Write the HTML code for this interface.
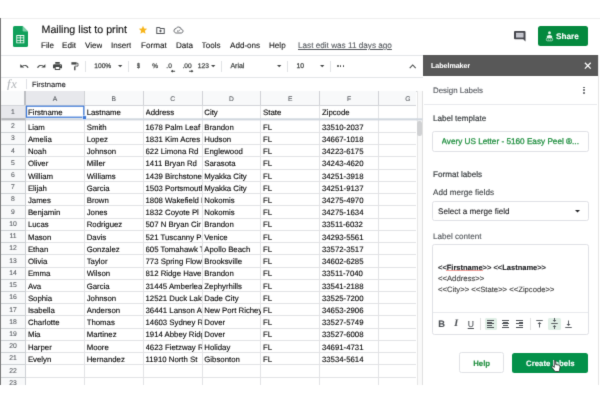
<!DOCTYPE html>
<html><head><meta charset="utf-8"><title>Mailing list to print</title>
<style>
html,body{margin:0;padding:0;background:#fff;}
body{width:600px;height:400px;overflow:hidden;position:relative;font-family:"Liberation Sans",Arial,sans-serif;text-rendering:geometricPrecision;}
#app{position:absolute;left:0;top:0;width:600px;height:400px;overflow:hidden;background:#fff;filter:url(#soft);}
.t{position:absolute;white-space:nowrap;overflow:hidden;}
.b{position:absolute;}
svg{position:absolute;overflow:visible;}
</style></head><body><svg width="0" height="0" style="position:absolute"><defs><filter id="soft" x="0" y="0" width="100%" height="100%" color-interpolation-filters="sRGB"><feConvolveMatrix order="3" kernelMatrix="0.0114 0.084 0.0114 0.084 0.6184 0.084 0.0114 0.084 0.0114" divisor="1" edgeMode="duplicate" preserveAlpha="true"/></filter></defs></svg><div id="app">

<div class="b" style="left:0;top:17.5px;width:1.3px;height:367.5px;background:#7a7a7a;"></div>
<div class="b" style="left:1px;top:18px;width:599px;height:1px;background:#efefef;"></div>
<svg style="left:13px;top:26px" width="15" height="21" viewBox="0 0 15 21">
<path d="M1.6 0 H9.6 L15 5.4 V19.4 Q15 21 13.4 21 H1.6 Q0 21 0 19.4 V1.6 Q0 0 1.6 0 Z" fill="#10a05b"/>
<path d="M9.6 0 L15 5.4 H10.8 Q9.6 5.4 9.6 4.2 Z" fill="#7fd0aa"/>
<path d="M3.3 9.0 H11.3 V17.3 H3.3 Z M4.20 9.90 V11.53 H6.90 V9.90 Z M4.20 12.33 V13.97 H6.90 V12.33 Z M4.20 14.77 V16.40 H6.90 V14.77 Z M7.70 9.90 V11.53 H10.40 V9.90 Z M7.70 12.33 V13.97 H10.40 V12.33 Z M7.70 14.77 V16.40 H10.40 V14.77 Z" fill="#f4faf6" fill-rule="evenodd"/>
</svg>
<div class="t " style="left:41.5px;top:23.30px;height:14px;line-height:14px;font-size:10.68px;color:#141414;font-weight:400;-webkit-text-stroke:0.15px currentColor;">Mailing list to print</div>
<svg style="left:138.2px;top:25px" width="10" height="10" viewBox="0 0 24 24"><path d="M12 17.27 18.18 21l-1.64-7.03L22 9.24l-7.19-.61L12 2 9.19 8.63 2 9.24l5.46 4.73L5.82 21z" fill="#f7b51c"/></svg>
<svg style="left:156.2px;top:26.5px" width="9" height="7" viewBox="0 0 19 15"><path d="M1.5 1 H7 L9 3 H17.5 V14 H1.5 Z" fill="none" stroke="#55585c" stroke-width="2.2" stroke-linejoin="round"/><path d="M9.5 5.5 V11.5 M6.5 8.5 H12.5" stroke="#55585c" stroke-width="2" fill="none"/></svg>
<svg style="left:174px;top:27px" width="9" height="6.4" viewBox="0 0 24 17"><path d="M19.35 6.04 A7.49 7.49 0 0 0 12 0 C9.11 0 6.6 1.64 5.35 4.04 A5.994 5.994 0 0 0 0 10 c0 3.31 2.69 6 6 6 h13 c2.76 0 5-2.24 5-5 0-2.64-2.05-4.78-4.65-4.96z" fill="none" stroke="#55585c" stroke-width="2.4"/><path d="M8 9.5 L11 12.2 L16 7" fill="none" stroke="#55585c" stroke-width="2.2"/></svg>
<div class="t " style="left:41px;top:40.20px;height:12px;line-height:12px;font-size:8.1px;color:#141414;font-weight:400;-webkit-text-stroke:0.1px currentColor;">File</div>
<div class="t " style="left:62px;top:40.20px;height:12px;line-height:12px;font-size:8.1px;color:#141414;font-weight:400;-webkit-text-stroke:0.1px currentColor;">Edit</div>
<div class="t " style="left:85px;top:40.20px;height:12px;line-height:12px;font-size:8.1px;color:#141414;font-weight:400;-webkit-text-stroke:0.1px currentColor;">View</div>
<div class="t " style="left:111px;top:40.20px;height:12px;line-height:12px;font-size:8.1px;color:#141414;font-weight:400;-webkit-text-stroke:0.1px currentColor;">Insert</div>
<div class="t " style="left:141px;top:40.20px;height:12px;line-height:12px;font-size:8.1px;color:#141414;font-weight:400;-webkit-text-stroke:0.1px currentColor;">Format</div>
<div class="t " style="left:176px;top:40.20px;height:12px;line-height:12px;font-size:8.1px;color:#141414;font-weight:400;-webkit-text-stroke:0.1px currentColor;">Data</div>
<div class="t " style="left:201.6px;top:40.20px;height:12px;line-height:12px;font-size:8.1px;color:#141414;font-weight:400;-webkit-text-stroke:0.1px currentColor;">Tools</div>
<div class="t " style="left:230px;top:40.20px;height:12px;line-height:12px;font-size:8.1px;color:#141414;font-weight:400;-webkit-text-stroke:0.1px currentColor;">Add-ons</div>
<div class="t " style="left:269px;top:40.20px;height:12px;line-height:12px;font-size:8.1px;color:#141414;font-weight:400;-webkit-text-stroke:0.1px currentColor;">Help</div>
<div class="t " style="left:298px;top:39.90px;height:12px;line-height:12px;font-size:8.18px;color:#55595e;font-weight:400;text-decoration:underline;text-underline-offset:1px;text-decoration-thickness:0.7px;-webkit-text-stroke:0.1px currentColor;">Last edit was 11 days ago</div>
<svg style="left:513.5px;top:30.5px" width="11.5" height="10.5" viewBox="0 0 23 21"><path d="M2 0 H21 Q23 0 23 2 V21 L18.5 16.5 H2 Q0 16.5 0 14.5 V2 Q0 0 2 0 Z" fill="#45464d"/><rect x="4" y="3.6" width="15" height="9.4" fill="#cfd0d7"/><path d="M4 6.9 H19 M4 9.9 H19" stroke="#a9aab2" stroke-width="0.9"/></svg>
<div class="b" style="left:537.6px;top:25.7px;width:50.4px;height:20.5px;background:#04893e;border-radius:2.5px;"></div>
<svg style="left:545.7px;top:30.8px" width="7" height="10.2" viewBox="0 0 16 21" preserveAspectRatio="none"><circle cx="8" cy="3.6" r="3.2" fill="#e6f4ea"/><path d="M2 10.5 Q8 6.5 14 10.5 V14.5 H2 Z" fill="#e6f4ea"/><rect x="0.8" y="14.6" width="14.4" height="5.6" rx="2.6" fill="none" stroke="#e6f4ea" stroke-width="1.5"/><circle cx="5" cy="17.4" r="1" fill="#e6f4ea"/><circle cx="11" cy="17.4" r="1" fill="#e6f4ea"/></svg>
<div class="t " style="left:556px;top:30.60px;height:12px;line-height:12px;font-size:8.2px;color:#ffffff;font-weight:700;-webkit-text-stroke:0.1px currentColor;">Share</div>
<div class="b" style="left:1px;top:54.5px;width:422px;height:1px;background:#e3e5e8;"></div>
<div class="b" style="left:1px;top:76.5px;width:422px;height:1px;background:#e3e5e8;"></div>
<svg style="left:20.2px;top:64.0px" width="8.6" height="5" viewBox="0 0 18 14" preserveAspectRatio="none"><path d="M5.5 5.5 C9.5 2.2 14.8 4 16.8 10.5" fill="none" stroke="#444746" stroke-width="2.6"/><path d="M0.5 1 V9.5 H9 Z" fill="#444746"/></svg>
<svg style="left:37px;top:64.0px" width="8.6" height="5" viewBox="0 0 18 14" preserveAspectRatio="none"><path d="M12.5 5.5 C8.5 2.2 3.2 4 1.2 10.5" fill="none" stroke="#444746" stroke-width="2.6"/><path d="M17.5 1 V9.5 H9 Z" fill="#444746"/></svg>
<svg style="left:53.2px;top:62.0px" width="9" height="8" viewBox="0 0 20 18" preserveAspectRatio="none"><path d="M5 0 H15 V4 H5 Z" fill="#444746"/><path d="M3 5 H17 Q20 5 20 8 V14 H16 V18 H4 V14 H0 V8 Q0 5 3 5 Z M6 11 V16 H14 V11 Z" fill="#444746" fill-rule="evenodd"/><circle cx="16.5" cy="8.3" r="1" fill="#fff"/></svg>
<svg style="left:70.6px;top:62.0px" width="7.6" height="8.2" viewBox="0 0 19 19" preserveAspectRatio="none"><path d="M1 0.5 H14 V6 H1 Z" fill="#444746"/><path d="M14 3 H17.5 V9.5 H9.5 V12" fill="none" stroke="#444746" stroke-width="2"/><path d="M7.8 11.5 H11.2 V19 H7.8 Z" fill="#444746"/></svg>
<div class="b" style="left:85px;top:61px;width:1px;height:10.5px;background:#e1e3e6;"></div>
<div class="t " style="left:94.2px;top:60.70px;height:12px;line-height:12px;font-size:6.7px;color:#444746;font-weight:400;-webkit-text-stroke:0.25px currentColor;">100%</div>
<svg style="left:118.2px;top:65.0px" width="4.4" height="2.2" viewBox="0 0 10 5"><path d="M0 0 H10 L5 5 Z" fill="#444746"/></svg>
<div class="b" style="left:128px;top:61px;width:1px;height:10.5px;background:#e1e3e6;"></div>
<div class="t " style="left:136.6px;top:60.70px;height:12px;line-height:12px;font-size:6.9px;color:#444746;font-weight:400;-webkit-text-stroke:0.25px currentColor;">$</div>
<div class="t " style="left:152.2px;top:60.70px;height:12px;line-height:12px;font-size:6.5px;color:#444746;font-weight:400;-webkit-text-stroke:0.25px currentColor;">%</div>
<div class="t " style="left:166.3px;top:60.70px;height:12px;line-height:12px;font-size:6.6px;color:#444746;font-weight:400;-webkit-text-stroke:0.25px currentColor;">.0</div>
<svg style="left:171px;top:69.6px" width="4.2" height="2.4" viewBox="0 0 10 6"><path d="M10 3 H2 M4 0.5 L1.2 3 L4 5.5" fill="none" stroke="#444746" stroke-width="2.6"/></svg>
<div class="t " style="left:182.4px;top:60.70px;height:12px;line-height:12px;font-size:6.6px;color:#444746;font-weight:400;-webkit-text-stroke:0.25px currentColor;">.00</div>
<svg style="left:188.5px;top:69.6px" width="4.2" height="2.4" viewBox="0 0 10 6"><path d="M0 3 H8 M6 0.5 L8.8 3 L6 5.5" fill="none" stroke="#444746" stroke-width="2.6"/></svg>
<div class="t " style="left:197.8px;top:60.70px;height:12px;line-height:12px;font-size:6.7px;color:#444746;font-weight:400;-webkit-text-stroke:0.25px currentColor;">123</div>
<svg style="left:210.60000000000002px;top:65.0px" width="4.4" height="2.2" viewBox="0 0 10 5"><path d="M0 0 H10 L5 5 Z" fill="#444746"/></svg>
<div class="b" style="left:220.5px;top:61px;width:1px;height:10.5px;background:#e1e3e6;"></div>
<div class="t " style="left:230.4px;top:60.70px;height:12px;line-height:12px;font-size:7px;color:#444746;font-weight:400;-webkit-text-stroke:0.25px currentColor;">Arial</div>
<svg style="left:276.8px;top:65.0px" width="4.4" height="2.2" viewBox="0 0 10 5"><path d="M0 0 H10 L5 5 Z" fill="#444746"/></svg>
<div class="b" style="left:287px;top:61px;width:1px;height:10.5px;background:#e1e3e6;"></div>
<div class="t " style="left:296.4px;top:60.70px;height:12px;line-height:12px;font-size:6.8px;color:#444746;font-weight:400;-webkit-text-stroke:0.25px currentColor;">10</div>
<svg style="left:320.3px;top:65.0px" width="4.4" height="2.2" viewBox="0 0 10 5"><path d="M0 0 H10 L5 5 Z" fill="#444746"/></svg>
<div class="b" style="left:330px;top:61px;width:1px;height:10.5px;background:#e1e3e6;"></div>
<div class="b" style="left:337.0px;top:65.1px;width:1.5px;height:1.5px;border-radius:1px;background:#444746;"></div>
<div class="b" style="left:339.9px;top:65.1px;width:1.5px;height:1.5px;border-radius:1px;background:#444746;"></div>
<div class="b" style="left:342.8px;top:65.1px;width:1.5px;height:1.5px;border-radius:1px;background:#444746;"></div>
<svg style="left:409px;top:63.599999999999994px" width="7.4" height="4.6" viewBox="0 0 16 10"><path d="M1.5 8.8 L8 2.2 L14.5 8.8" fill="none" stroke="#444746" stroke-width="2.2"/></svg>
<div class="b" style="left:1px;top:90.5px;width:422px;height:1px;background:#d5d7da;"></div>
<div class="t " style="left:7px;top:78.20px;height:12px;line-height:12px;font-size:12.5px;color:#b4b7bb;font-weight:400;font-family:'Liberation Serif','DejaVu Serif',serif;font-style:italic;letter-spacing:0.8px;-webkit-text-stroke:0.1px currentColor;">fx</div>
<div class="b" style="left:25.5px;top:79px;width:1px;height:10px;background:#dfe1e5;"></div>
<div class="t " style="left:32px;top:78.50px;height:12px;line-height:12px;font-size:7.6px;color:#202124;font-weight:400;-webkit-text-stroke:0.1px currentColor;">Firstname</div>
<div class="b" style="left:1.3px;top:91.3px;width:415.2px;height:14.200000000000003px;background:#f8f9fa;"></div>
<div class="b" style="left:1.3px;top:105.5px;width:24.3px;height:279.5px;background:#f8f9fa;"></div>
<div class="b" style="left:25.6px;top:91.3px;width:58.8px;height:14.200000000000003px;background:#e7e8ec;"></div>
<div class="b" style="left:1.3px;top:105.5px;width:24.3px;height:12.5px;background:#e7e8ec;"></div>
<div class="b" style="left:83.90px;top:91.3px;width:1px;height:14.200000000000003px;background:#d0d2d6;"></div>
<div class="b" style="left:83.90px;top:105.5px;width:1px;height:279.5px;background:#e2e3e5;"></div>
<div class="b" style="left:142.70px;top:91.3px;width:1px;height:14.200000000000003px;background:#d0d2d6;"></div>
<div class="b" style="left:142.70px;top:105.5px;width:1px;height:279.5px;background:#e2e3e5;"></div>
<div class="b" style="left:201.50px;top:91.3px;width:1px;height:14.200000000000003px;background:#d0d2d6;"></div>
<div class="b" style="left:201.50px;top:105.5px;width:1px;height:279.5px;background:#e2e3e5;"></div>
<div class="b" style="left:260.30px;top:91.3px;width:1px;height:14.200000000000003px;background:#d0d2d6;"></div>
<div class="b" style="left:260.30px;top:105.5px;width:1px;height:279.5px;background:#e2e3e5;"></div>
<div class="b" style="left:319.10px;top:91.3px;width:1px;height:14.200000000000003px;background:#d0d2d6;"></div>
<div class="b" style="left:319.10px;top:105.5px;width:1px;height:279.5px;background:#e2e3e5;"></div>
<div class="b" style="left:377.90px;top:91.3px;width:1px;height:14.200000000000003px;background:#d0d2d6;"></div>
<div class="b" style="left:377.90px;top:105.5px;width:1px;height:279.5px;background:#e2e3e5;"></div>
<div class="b" style="left:24.8px;top:105.5px;width:1px;height:279.5px;background:#cdd0d4;"></div>
<div class="b" style="left:1.3px;top:105.0px;width:415.2px;height:1px;background:#d3d5d9;"></div>
<div class="b" style="left:25.6px;top:132.03px;width:390.9px;height:1px;background:#e2e3e5;"></div>
<div class="b" style="left:1.3px;top:132.03px;width:24.3px;height:1px;background:#cdd0d4;"></div>
<div class="b" style="left:25.6px;top:144.25px;width:390.9px;height:1px;background:#e2e3e5;"></div>
<div class="b" style="left:1.3px;top:144.25px;width:24.3px;height:1px;background:#cdd0d4;"></div>
<div class="b" style="left:25.6px;top:156.48px;width:390.9px;height:1px;background:#e2e3e5;"></div>
<div class="b" style="left:1.3px;top:156.48px;width:24.3px;height:1px;background:#cdd0d4;"></div>
<div class="b" style="left:25.6px;top:168.70px;width:390.9px;height:1px;background:#e2e3e5;"></div>
<div class="b" style="left:1.3px;top:168.70px;width:24.3px;height:1px;background:#cdd0d4;"></div>
<div class="b" style="left:25.6px;top:180.93px;width:390.9px;height:1px;background:#e2e3e5;"></div>
<div class="b" style="left:1.3px;top:180.93px;width:24.3px;height:1px;background:#cdd0d4;"></div>
<div class="b" style="left:25.6px;top:193.16px;width:390.9px;height:1px;background:#e2e3e5;"></div>
<div class="b" style="left:1.3px;top:193.16px;width:24.3px;height:1px;background:#cdd0d4;"></div>
<div class="b" style="left:25.6px;top:205.38px;width:390.9px;height:1px;background:#e2e3e5;"></div>
<div class="b" style="left:1.3px;top:205.38px;width:24.3px;height:1px;background:#cdd0d4;"></div>
<div class="b" style="left:25.6px;top:217.61px;width:390.9px;height:1px;background:#e2e3e5;"></div>
<div class="b" style="left:1.3px;top:217.61px;width:24.3px;height:1px;background:#cdd0d4;"></div>
<div class="b" style="left:25.6px;top:229.83px;width:390.9px;height:1px;background:#e2e3e5;"></div>
<div class="b" style="left:1.3px;top:229.83px;width:24.3px;height:1px;background:#cdd0d4;"></div>
<div class="b" style="left:25.6px;top:242.06px;width:390.9px;height:1px;background:#e2e3e5;"></div>
<div class="b" style="left:1.3px;top:242.06px;width:24.3px;height:1px;background:#cdd0d4;"></div>
<div class="b" style="left:25.6px;top:254.29px;width:390.9px;height:1px;background:#e2e3e5;"></div>
<div class="b" style="left:1.3px;top:254.29px;width:24.3px;height:1px;background:#cdd0d4;"></div>
<div class="b" style="left:25.6px;top:266.51px;width:390.9px;height:1px;background:#e2e3e5;"></div>
<div class="b" style="left:1.3px;top:266.51px;width:24.3px;height:1px;background:#cdd0d4;"></div>
<div class="b" style="left:25.6px;top:278.74px;width:390.9px;height:1px;background:#e2e3e5;"></div>
<div class="b" style="left:1.3px;top:278.74px;width:24.3px;height:1px;background:#cdd0d4;"></div>
<div class="b" style="left:25.6px;top:290.96px;width:390.9px;height:1px;background:#e2e3e5;"></div>
<div class="b" style="left:1.3px;top:290.96px;width:24.3px;height:1px;background:#cdd0d4;"></div>
<div class="b" style="left:25.6px;top:303.19px;width:390.9px;height:1px;background:#e2e3e5;"></div>
<div class="b" style="left:1.3px;top:303.19px;width:24.3px;height:1px;background:#cdd0d4;"></div>
<div class="b" style="left:25.6px;top:315.42px;width:390.9px;height:1px;background:#e2e3e5;"></div>
<div class="b" style="left:1.3px;top:315.42px;width:24.3px;height:1px;background:#cdd0d4;"></div>
<div class="b" style="left:25.6px;top:327.64px;width:390.9px;height:1px;background:#e2e3e5;"></div>
<div class="b" style="left:1.3px;top:327.64px;width:24.3px;height:1px;background:#cdd0d4;"></div>
<div class="b" style="left:25.6px;top:339.87px;width:390.9px;height:1px;background:#e2e3e5;"></div>
<div class="b" style="left:1.3px;top:339.87px;width:24.3px;height:1px;background:#cdd0d4;"></div>
<div class="b" style="left:25.6px;top:352.09px;width:390.9px;height:1px;background:#e2e3e5;"></div>
<div class="b" style="left:1.3px;top:352.09px;width:24.3px;height:1px;background:#cdd0d4;"></div>
<div class="b" style="left:25.6px;top:364.32px;width:390.9px;height:1px;background:#e2e3e5;"></div>
<div class="b" style="left:1.3px;top:364.32px;width:24.3px;height:1px;background:#cdd0d4;"></div>
<div class="b" style="left:25.6px;top:376.55px;width:390.9px;height:1px;background:#e2e3e5;"></div>
<div class="b" style="left:1.3px;top:376.55px;width:24.3px;height:1px;background:#cdd0d4;"></div>
<div class="b" style="left:23.8px;top:91.3px;width:1.8px;height:14.200000000000003px;background:#bdbfc3;"></div>
<svg style="left:0;top:0" width="600" height="400"><rect x="1.3" y="118.1" width="24.3" height="2.3" fill="#b4b6ba"/><rect x="25.6" y="118.3" width="396.9" height="2.1" fill="#d1d7df"/></svg>
<div class="t " style="left:50.0px;top:93.60px;height:12px;line-height:12px;font-size:6.7px;color:#5a5e63;font-weight:400;text-align:center;width:10px;-webkit-text-stroke:0.1px currentColor;">A</div>
<div class="t " style="left:108.80000000000001px;top:93.60px;height:12px;line-height:12px;font-size:6.7px;color:#5a5e63;font-weight:400;text-align:center;width:10px;-webkit-text-stroke:0.1px currentColor;">B</div>
<div class="t " style="left:167.6px;top:93.60px;height:12px;line-height:12px;font-size:6.7px;color:#5a5e63;font-weight:400;text-align:center;width:10px;-webkit-text-stroke:0.1px currentColor;">C</div>
<div class="t " style="left:226.39999999999998px;top:93.60px;height:12px;line-height:12px;font-size:6.7px;color:#5a5e63;font-weight:400;text-align:center;width:10px;-webkit-text-stroke:0.1px currentColor;">D</div>
<div class="t " style="left:285.2px;top:93.60px;height:12px;line-height:12px;font-size:6.7px;color:#5a5e63;font-weight:400;text-align:center;width:10px;-webkit-text-stroke:0.1px currentColor;">E</div>
<div class="t " style="left:344.0px;top:93.60px;height:12px;line-height:12px;font-size:6.7px;color:#5a5e63;font-weight:400;text-align:center;width:10px;-webkit-text-stroke:0.1px currentColor;">F</div>
<div class="t " style="left:402.79999999999995px;top:93.60px;height:12px;line-height:12px;font-size:6.7px;color:#5a5e63;font-weight:400;text-align:center;width:10px;-webkit-text-stroke:0.1px currentColor;">G</div>
<div class="t " style="left:0.8px;top:106.80px;height:12px;line-height:12px;font-size:6.8px;color:#5a5e63;font-weight:400;text-align:center;width:24.3px;-webkit-text-stroke:0.1px currentColor;">1</div>
<div class="t " style="left:0.8px;top:121.11px;height:12px;line-height:12px;font-size:6.8px;color:#5a5e63;font-weight:400;text-align:center;width:24.3px;-webkit-text-stroke:0.1px currentColor;">2</div>
<div class="t " style="left:0.8px;top:133.34px;height:12px;line-height:12px;font-size:6.8px;color:#5a5e63;font-weight:400;text-align:center;width:24.3px;-webkit-text-stroke:0.1px currentColor;">3</div>
<div class="t " style="left:0.8px;top:145.56px;height:12px;line-height:12px;font-size:6.8px;color:#5a5e63;font-weight:400;text-align:center;width:24.3px;-webkit-text-stroke:0.1px currentColor;">4</div>
<div class="t " style="left:0.8px;top:157.79px;height:12px;line-height:12px;font-size:6.8px;color:#5a5e63;font-weight:400;text-align:center;width:24.3px;-webkit-text-stroke:0.1px currentColor;">5</div>
<div class="t " style="left:0.8px;top:170.02px;height:12px;line-height:12px;font-size:6.8px;color:#5a5e63;font-weight:400;text-align:center;width:24.3px;-webkit-text-stroke:0.1px currentColor;">6</div>
<div class="t " style="left:0.8px;top:182.24px;height:12px;line-height:12px;font-size:6.8px;color:#5a5e63;font-weight:400;text-align:center;width:24.3px;-webkit-text-stroke:0.1px currentColor;">7</div>
<div class="t " style="left:0.8px;top:194.47px;height:12px;line-height:12px;font-size:6.8px;color:#5a5e63;font-weight:400;text-align:center;width:24.3px;-webkit-text-stroke:0.1px currentColor;">8</div>
<div class="t " style="left:0.8px;top:206.69px;height:12px;line-height:12px;font-size:6.8px;color:#5a5e63;font-weight:400;text-align:center;width:24.3px;-webkit-text-stroke:0.1px currentColor;">9</div>
<div class="t " style="left:0.8px;top:218.92px;height:12px;line-height:12px;font-size:6.8px;color:#5a5e63;font-weight:400;text-align:center;width:24.3px;-webkit-text-stroke:0.1px currentColor;">10</div>
<div class="t " style="left:0.8px;top:231.15px;height:12px;line-height:12px;font-size:6.8px;color:#5a5e63;font-weight:400;text-align:center;width:24.3px;-webkit-text-stroke:0.1px currentColor;">11</div>
<div class="t " style="left:0.8px;top:243.37px;height:12px;line-height:12px;font-size:6.8px;color:#5a5e63;font-weight:400;text-align:center;width:24.3px;-webkit-text-stroke:0.1px currentColor;">12</div>
<div class="t " style="left:0.8px;top:255.60px;height:12px;line-height:12px;font-size:6.8px;color:#5a5e63;font-weight:400;text-align:center;width:24.3px;-webkit-text-stroke:0.1px currentColor;">13</div>
<div class="t " style="left:0.8px;top:267.83px;height:12px;line-height:12px;font-size:6.8px;color:#5a5e63;font-weight:400;text-align:center;width:24.3px;-webkit-text-stroke:0.1px currentColor;">14</div>
<div class="t " style="left:0.8px;top:280.05px;height:12px;line-height:12px;font-size:6.8px;color:#5a5e63;font-weight:400;text-align:center;width:24.3px;-webkit-text-stroke:0.1px currentColor;">15</div>
<div class="t " style="left:0.8px;top:292.28px;height:12px;line-height:12px;font-size:6.8px;color:#5a5e63;font-weight:400;text-align:center;width:24.3px;-webkit-text-stroke:0.1px currentColor;">16</div>
<div class="t " style="left:0.8px;top:304.50px;height:12px;line-height:12px;font-size:6.8px;color:#5a5e63;font-weight:400;text-align:center;width:24.3px;-webkit-text-stroke:0.1px currentColor;">17</div>
<div class="t " style="left:0.8px;top:316.73px;height:12px;line-height:12px;font-size:6.8px;color:#5a5e63;font-weight:400;text-align:center;width:24.3px;-webkit-text-stroke:0.1px currentColor;">18</div>
<div class="t " style="left:0.8px;top:328.96px;height:12px;line-height:12px;font-size:6.8px;color:#5a5e63;font-weight:400;text-align:center;width:24.3px;-webkit-text-stroke:0.1px currentColor;">19</div>
<div class="t " style="left:0.8px;top:341.18px;height:12px;line-height:12px;font-size:6.8px;color:#5a5e63;font-weight:400;text-align:center;width:24.3px;-webkit-text-stroke:0.1px currentColor;">20</div>
<div class="t " style="left:0.8px;top:353.41px;height:12px;line-height:12px;font-size:6.8px;color:#5a5e63;font-weight:400;text-align:center;width:24.3px;-webkit-text-stroke:0.1px currentColor;">21</div>
<div class="t " style="left:0.8px;top:365.63px;height:12px;line-height:12px;font-size:6.8px;color:#5a5e63;font-weight:400;text-align:center;width:24.3px;-webkit-text-stroke:0.1px currentColor;">22</div>
<div class="t " style="left:0.8px;top:377.86px;height:12px;line-height:12px;font-size:6.8px;color:#5a5e63;font-weight:400;text-align:center;width:24.3px;-webkit-text-stroke:0.1px currentColor;">23</div>
<div class="t " style="left:27.900000000000002px;top:107.30px;height:11px;line-height:11px;font-size:7.8px;color:#000;font-weight:400;-webkit-text-stroke:0.1px #000;width:56.8px;">Firstname</div>
<div class="t " style="left:86.7px;top:107.30px;height:11px;line-height:11px;font-size:7.8px;color:#000;font-weight:400;-webkit-text-stroke:0.1px #000;width:56.8px;">Lastname</div>
<div class="t " style="left:145.5px;top:107.30px;height:11px;line-height:11px;font-size:7.8px;color:#000;font-weight:400;-webkit-text-stroke:0.1px #000;width:56.8px;">Address</div>
<div class="t " style="left:204.29999999999998px;top:107.30px;height:11px;line-height:11px;font-size:7.8px;color:#000;font-weight:400;-webkit-text-stroke:0.1px #000;width:56.8px;">City</div>
<div class="t " style="left:263.1px;top:107.30px;height:11px;line-height:11px;font-size:7.8px;color:#000;font-weight:400;-webkit-text-stroke:0.1px #000;width:56.8px;">State</div>
<div class="t " style="left:321.90000000000003px;top:107.30px;height:11px;line-height:11px;font-size:7.8px;color:#000;font-weight:400;-webkit-text-stroke:0.1px #000;width:56.8px;">Zipcode</div>
<div class="t " style="left:27.900000000000002px;top:121.61px;height:11px;line-height:11px;font-size:7.8px;color:#000;font-weight:400;-webkit-text-stroke:0.1px #000;width:56.8px;">Liam</div>
<div class="t " style="left:86.7px;top:121.61px;height:11px;line-height:11px;font-size:7.8px;color:#000;font-weight:400;-webkit-text-stroke:0.1px #000;width:56.8px;">Smith</div>
<div class="t " style="left:145.5px;top:121.61px;height:11px;line-height:11px;font-size:7.8px;color:#000;font-weight:400;-webkit-text-stroke:0.1px #000;width:56.8px;">1678 Palm Leaf</div>
<div class="t " style="left:204.29999999999998px;top:121.61px;height:11px;line-height:11px;font-size:7.8px;color:#000;font-weight:400;-webkit-text-stroke:0.1px #000;width:56.8px;">Brandon</div>
<div class="t " style="left:263.1px;top:121.61px;height:11px;line-height:11px;font-size:7.8px;color:#000;font-weight:400;-webkit-text-stroke:0.1px #000;width:56.8px;">FL</div>
<div class="t " style="left:321.90000000000003px;top:121.61px;height:11px;line-height:11px;font-size:7.8px;color:#000;font-weight:400;-webkit-text-stroke:0.1px #000;width:56.8px;">33510-2037</div>
<div class="t " style="left:27.900000000000002px;top:133.84px;height:11px;line-height:11px;font-size:7.8px;color:#000;font-weight:400;-webkit-text-stroke:0.1px #000;width:56.8px;">Amelia</div>
<div class="t " style="left:86.7px;top:133.84px;height:11px;line-height:11px;font-size:7.8px;color:#000;font-weight:400;-webkit-text-stroke:0.1px #000;width:56.8px;">Lopez</div>
<div class="t " style="left:145.5px;top:133.84px;height:11px;line-height:11px;font-size:7.8px;color:#000;font-weight:400;-webkit-text-stroke:0.1px #000;width:56.8px;">1831 Kim Acres</div>
<div class="t " style="left:204.29999999999998px;top:133.84px;height:11px;line-height:11px;font-size:7.8px;color:#000;font-weight:400;-webkit-text-stroke:0.1px #000;width:56.8px;">Hudson</div>
<div class="t " style="left:263.1px;top:133.84px;height:11px;line-height:11px;font-size:7.8px;color:#000;font-weight:400;-webkit-text-stroke:0.1px #000;width:56.8px;">FL</div>
<div class="t " style="left:321.90000000000003px;top:133.84px;height:11px;line-height:11px;font-size:7.8px;color:#000;font-weight:400;-webkit-text-stroke:0.1px #000;width:56.8px;">34667-1018</div>
<div class="t " style="left:27.900000000000002px;top:146.06px;height:11px;line-height:11px;font-size:7.8px;color:#000;font-weight:400;-webkit-text-stroke:0.1px #000;width:56.8px;">Noah</div>
<div class="t " style="left:86.7px;top:146.06px;height:11px;line-height:11px;font-size:7.8px;color:#000;font-weight:400;-webkit-text-stroke:0.1px #000;width:56.8px;">Johnson</div>
<div class="t " style="left:145.5px;top:146.06px;height:11px;line-height:11px;font-size:7.8px;color:#000;font-weight:400;-webkit-text-stroke:0.1px #000;width:56.8px;">622 Limona Rd</div>
<div class="t " style="left:204.29999999999998px;top:146.06px;height:11px;line-height:11px;font-size:7.8px;color:#000;font-weight:400;-webkit-text-stroke:0.1px #000;width:56.8px;">Englewood</div>
<div class="t " style="left:263.1px;top:146.06px;height:11px;line-height:11px;font-size:7.8px;color:#000;font-weight:400;-webkit-text-stroke:0.1px #000;width:56.8px;">FL</div>
<div class="t " style="left:321.90000000000003px;top:146.06px;height:11px;line-height:11px;font-size:7.8px;color:#000;font-weight:400;-webkit-text-stroke:0.1px #000;width:56.8px;">34223-6175</div>
<div class="t " style="left:27.900000000000002px;top:158.29px;height:11px;line-height:11px;font-size:7.8px;color:#000;font-weight:400;-webkit-text-stroke:0.1px #000;width:56.8px;">Oliver</div>
<div class="t " style="left:86.7px;top:158.29px;height:11px;line-height:11px;font-size:7.8px;color:#000;font-weight:400;-webkit-text-stroke:0.1px #000;width:56.8px;">Miller</div>
<div class="t " style="left:145.5px;top:158.29px;height:11px;line-height:11px;font-size:7.8px;color:#000;font-weight:400;-webkit-text-stroke:0.1px #000;width:56.8px;">1411 Bryan Rd</div>
<div class="t " style="left:204.29999999999998px;top:158.29px;height:11px;line-height:11px;font-size:7.8px;color:#000;font-weight:400;-webkit-text-stroke:0.1px #000;width:56.8px;">Sarasota</div>
<div class="t " style="left:263.1px;top:158.29px;height:11px;line-height:11px;font-size:7.8px;color:#000;font-weight:400;-webkit-text-stroke:0.1px #000;width:56.8px;">FL</div>
<div class="t " style="left:321.90000000000003px;top:158.29px;height:11px;line-height:11px;font-size:7.8px;color:#000;font-weight:400;-webkit-text-stroke:0.1px #000;width:56.8px;">34243-4620</div>
<div class="t " style="left:27.900000000000002px;top:170.52px;height:11px;line-height:11px;font-size:7.8px;color:#000;font-weight:400;-webkit-text-stroke:0.1px #000;width:56.8px;">William</div>
<div class="t " style="left:86.7px;top:170.52px;height:11px;line-height:11px;font-size:7.8px;color:#000;font-weight:400;-webkit-text-stroke:0.1px #000;width:56.8px;">Williams</div>
<div class="t " style="left:145.5px;top:170.52px;height:11px;line-height:11px;font-size:7.8px;color:#000;font-weight:400;-webkit-text-stroke:0.1px #000;width:56.8px;">1439 Birchstone Ave</div>
<div class="t " style="left:204.29999999999998px;top:170.52px;height:11px;line-height:11px;font-size:7.8px;color:#000;font-weight:400;-webkit-text-stroke:0.1px #000;width:56.8px;">Myakka City</div>
<div class="t " style="left:263.1px;top:170.52px;height:11px;line-height:11px;font-size:7.8px;color:#000;font-weight:400;-webkit-text-stroke:0.1px #000;width:56.8px;">FL</div>
<div class="t " style="left:321.90000000000003px;top:170.52px;height:11px;line-height:11px;font-size:7.8px;color:#000;font-weight:400;-webkit-text-stroke:0.1px #000;width:56.8px;">34251-3918</div>
<div class="t " style="left:27.900000000000002px;top:182.74px;height:11px;line-height:11px;font-size:7.8px;color:#000;font-weight:400;-webkit-text-stroke:0.1px #000;width:56.8px;">Elijah</div>
<div class="t " style="left:86.7px;top:182.74px;height:11px;line-height:11px;font-size:7.8px;color:#000;font-weight:400;-webkit-text-stroke:0.1px #000;width:56.8px;">Garcia</div>
<div class="t " style="left:145.5px;top:182.74px;height:11px;line-height:11px;font-size:7.8px;color:#000;font-weight:400;-webkit-text-stroke:0.1px #000;width:56.8px;">1503 Portsmouth Lake Dr</div>
<div class="t " style="left:204.29999999999998px;top:182.74px;height:11px;line-height:11px;font-size:7.8px;color:#000;font-weight:400;-webkit-text-stroke:0.1px #000;width:56.8px;">Myakka City</div>
<div class="t " style="left:263.1px;top:182.74px;height:11px;line-height:11px;font-size:7.8px;color:#000;font-weight:400;-webkit-text-stroke:0.1px #000;width:56.8px;">FL</div>
<div class="t " style="left:321.90000000000003px;top:182.74px;height:11px;line-height:11px;font-size:7.8px;color:#000;font-weight:400;-webkit-text-stroke:0.1px #000;width:56.8px;">34251-9137</div>
<div class="t " style="left:27.900000000000002px;top:194.97px;height:11px;line-height:11px;font-size:7.8px;color:#000;font-weight:400;-webkit-text-stroke:0.1px #000;width:56.8px;">James</div>
<div class="t " style="left:86.7px;top:194.97px;height:11px;line-height:11px;font-size:7.8px;color:#000;font-weight:400;-webkit-text-stroke:0.1px #000;width:56.8px;">Brown</div>
<div class="t " style="left:145.5px;top:194.97px;height:11px;line-height:11px;font-size:7.8px;color:#000;font-weight:400;-webkit-text-stroke:0.1px #000;width:56.8px;">1808 Wakefield Dr</div>
<div class="t " style="left:204.29999999999998px;top:194.97px;height:11px;line-height:11px;font-size:7.8px;color:#000;font-weight:400;-webkit-text-stroke:0.1px #000;width:56.8px;">Nokomis</div>
<div class="t " style="left:263.1px;top:194.97px;height:11px;line-height:11px;font-size:7.8px;color:#000;font-weight:400;-webkit-text-stroke:0.1px #000;width:56.8px;">FL</div>
<div class="t " style="left:321.90000000000003px;top:194.97px;height:11px;line-height:11px;font-size:7.8px;color:#000;font-weight:400;-webkit-text-stroke:0.1px #000;width:56.8px;">34275-4970</div>
<div class="t " style="left:27.900000000000002px;top:207.19px;height:11px;line-height:11px;font-size:7.8px;color:#000;font-weight:400;-webkit-text-stroke:0.1px #000;width:56.8px;">Benjamin</div>
<div class="t " style="left:86.7px;top:207.19px;height:11px;line-height:11px;font-size:7.8px;color:#000;font-weight:400;-webkit-text-stroke:0.1px #000;width:56.8px;">Jones</div>
<div class="t " style="left:145.5px;top:207.19px;height:11px;line-height:11px;font-size:7.8px;color:#000;font-weight:400;-webkit-text-stroke:0.1px #000;width:56.8px;">1832 Coyote Pl</div>
<div class="t " style="left:204.29999999999998px;top:207.19px;height:11px;line-height:11px;font-size:7.8px;color:#000;font-weight:400;-webkit-text-stroke:0.1px #000;width:56.8px;">Nokomis</div>
<div class="t " style="left:263.1px;top:207.19px;height:11px;line-height:11px;font-size:7.8px;color:#000;font-weight:400;-webkit-text-stroke:0.1px #000;width:56.8px;">FL</div>
<div class="t " style="left:321.90000000000003px;top:207.19px;height:11px;line-height:11px;font-size:7.8px;color:#000;font-weight:400;-webkit-text-stroke:0.1px #000;width:56.8px;">34275-1634</div>
<div class="t " style="left:27.900000000000002px;top:219.42px;height:11px;line-height:11px;font-size:7.8px;color:#000;font-weight:400;-webkit-text-stroke:0.1px #000;width:56.8px;">Lucas</div>
<div class="t " style="left:86.7px;top:219.42px;height:11px;line-height:11px;font-size:7.8px;color:#000;font-weight:400;-webkit-text-stroke:0.1px #000;width:56.8px;">Rodriguez</div>
<div class="t " style="left:145.5px;top:219.42px;height:11px;line-height:11px;font-size:7.8px;color:#000;font-weight:400;-webkit-text-stroke:0.1px #000;width:56.8px;">507 N Bryan Cir</div>
<div class="t " style="left:204.29999999999998px;top:219.42px;height:11px;line-height:11px;font-size:7.8px;color:#000;font-weight:400;-webkit-text-stroke:0.1px #000;width:56.8px;">Brandon</div>
<div class="t " style="left:263.1px;top:219.42px;height:11px;line-height:11px;font-size:7.8px;color:#000;font-weight:400;-webkit-text-stroke:0.1px #000;width:56.8px;">FL</div>
<div class="t " style="left:321.90000000000003px;top:219.42px;height:11px;line-height:11px;font-size:7.8px;color:#000;font-weight:400;-webkit-text-stroke:0.1px #000;width:56.8px;">33511-6032</div>
<div class="t " style="left:27.900000000000002px;top:231.65px;height:11px;line-height:11px;font-size:7.8px;color:#000;font-weight:400;-webkit-text-stroke:0.1px #000;width:56.8px;">Mason</div>
<div class="t " style="left:86.7px;top:231.65px;height:11px;line-height:11px;font-size:7.8px;color:#000;font-weight:400;-webkit-text-stroke:0.1px #000;width:56.8px;">Davis</div>
<div class="t " style="left:145.5px;top:231.65px;height:11px;line-height:11px;font-size:7.8px;color:#000;font-weight:400;-webkit-text-stroke:0.1px #000;width:56.8px;">521 Tuscanny Park Loop</div>
<div class="t " style="left:204.29999999999998px;top:231.65px;height:11px;line-height:11px;font-size:7.8px;color:#000;font-weight:400;-webkit-text-stroke:0.1px #000;width:56.8px;">Venice</div>
<div class="t " style="left:263.1px;top:231.65px;height:11px;line-height:11px;font-size:7.8px;color:#000;font-weight:400;-webkit-text-stroke:0.1px #000;width:56.8px;">FL</div>
<div class="t " style="left:321.90000000000003px;top:231.65px;height:11px;line-height:11px;font-size:7.8px;color:#000;font-weight:400;-webkit-text-stroke:0.1px #000;width:56.8px;">34293-5561</div>
<div class="t " style="left:27.900000000000002px;top:243.87px;height:11px;line-height:11px;font-size:7.8px;color:#000;font-weight:400;-webkit-text-stroke:0.1px #000;width:56.8px;">Ethan</div>
<div class="t " style="left:86.7px;top:243.87px;height:11px;line-height:11px;font-size:7.8px;color:#000;font-weight:400;-webkit-text-stroke:0.1px #000;width:56.8px;">Gonzalez</div>
<div class="t " style="left:145.5px;top:243.87px;height:11px;line-height:11px;font-size:7.8px;color:#000;font-weight:400;-webkit-text-stroke:0.1px #000;width:56.8px;">605 Tomahawk Trl</div>
<div class="t " style="left:204.29999999999998px;top:243.87px;height:11px;line-height:11px;font-size:7.8px;color:#000;font-weight:400;-webkit-text-stroke:0.1px #000;width:56.8px;">Apollo Beach</div>
<div class="t " style="left:263.1px;top:243.87px;height:11px;line-height:11px;font-size:7.8px;color:#000;font-weight:400;-webkit-text-stroke:0.1px #000;width:56.8px;">FL</div>
<div class="t " style="left:321.90000000000003px;top:243.87px;height:11px;line-height:11px;font-size:7.8px;color:#000;font-weight:400;-webkit-text-stroke:0.1px #000;width:56.8px;">33572-3517</div>
<div class="t " style="left:27.900000000000002px;top:256.10px;height:11px;line-height:11px;font-size:7.8px;color:#000;font-weight:400;-webkit-text-stroke:0.1px #000;width:56.8px;">Olivia</div>
<div class="t " style="left:86.7px;top:256.10px;height:11px;line-height:11px;font-size:7.8px;color:#000;font-weight:400;-webkit-text-stroke:0.1px #000;width:56.8px;">Taylor</div>
<div class="t " style="left:145.5px;top:256.10px;height:11px;line-height:11px;font-size:7.8px;color:#000;font-weight:400;-webkit-text-stroke:0.1px #000;width:56.8px;">773 Spring Flowers Trl</div>
<div class="t " style="left:204.29999999999998px;top:256.10px;height:11px;line-height:11px;font-size:7.8px;color:#000;font-weight:400;-webkit-text-stroke:0.1px #000;width:56.8px;">Brooksville</div>
<div class="t " style="left:263.1px;top:256.10px;height:11px;line-height:11px;font-size:7.8px;color:#000;font-weight:400;-webkit-text-stroke:0.1px #000;width:56.8px;">FL</div>
<div class="t " style="left:321.90000000000003px;top:256.10px;height:11px;line-height:11px;font-size:7.8px;color:#000;font-weight:400;-webkit-text-stroke:0.1px #000;width:56.8px;">34602-6285</div>
<div class="t " style="left:27.900000000000002px;top:268.33px;height:11px;line-height:11px;font-size:7.8px;color:#000;font-weight:400;-webkit-text-stroke:0.1px #000;width:56.8px;">Emma</div>
<div class="t " style="left:86.7px;top:268.33px;height:11px;line-height:11px;font-size:7.8px;color:#000;font-weight:400;-webkit-text-stroke:0.1px #000;width:56.8px;">Wilson</div>
<div class="t " style="left:145.5px;top:268.33px;height:11px;line-height:11px;font-size:7.8px;color:#000;font-weight:400;-webkit-text-stroke:0.1px #000;width:56.8px;">812 Ridge Haven Dr</div>
<div class="t " style="left:204.29999999999998px;top:268.33px;height:11px;line-height:11px;font-size:7.8px;color:#000;font-weight:400;-webkit-text-stroke:0.1px #000;width:56.8px;">Brandon</div>
<div class="t " style="left:263.1px;top:268.33px;height:11px;line-height:11px;font-size:7.8px;color:#000;font-weight:400;-webkit-text-stroke:0.1px #000;width:56.8px;">FL</div>
<div class="t " style="left:321.90000000000003px;top:268.33px;height:11px;line-height:11px;font-size:7.8px;color:#000;font-weight:400;-webkit-text-stroke:0.1px #000;width:56.8px;">33511-7040</div>
<div class="t " style="left:27.900000000000002px;top:280.55px;height:11px;line-height:11px;font-size:7.8px;color:#000;font-weight:400;-webkit-text-stroke:0.1px #000;width:56.8px;">Ava</div>
<div class="t " style="left:86.7px;top:280.55px;height:11px;line-height:11px;font-size:7.8px;color:#000;font-weight:400;-webkit-text-stroke:0.1px #000;width:56.8px;">Garcia</div>
<div class="t " style="left:145.5px;top:280.55px;height:11px;line-height:11px;font-size:7.8px;color:#000;font-weight:400;-webkit-text-stroke:0.1px #000;width:56.8px;">31445 Amberlea</div>
<div class="t " style="left:204.29999999999998px;top:280.55px;height:11px;line-height:11px;font-size:7.8px;color:#000;font-weight:400;-webkit-text-stroke:0.1px #000;width:56.8px;">Zephyrhills</div>
<div class="t " style="left:263.1px;top:280.55px;height:11px;line-height:11px;font-size:7.8px;color:#000;font-weight:400;-webkit-text-stroke:0.1px #000;width:56.8px;">FL</div>
<div class="t " style="left:321.90000000000003px;top:280.55px;height:11px;line-height:11px;font-size:7.8px;color:#000;font-weight:400;-webkit-text-stroke:0.1px #000;width:56.8px;">33541-2188</div>
<div class="t " style="left:27.900000000000002px;top:292.78px;height:11px;line-height:11px;font-size:7.8px;color:#000;font-weight:400;-webkit-text-stroke:0.1px #000;width:56.8px;">Sophia</div>
<div class="t " style="left:86.7px;top:292.78px;height:11px;line-height:11px;font-size:7.8px;color:#000;font-weight:400;-webkit-text-stroke:0.1px #000;width:56.8px;">Johnson</div>
<div class="t " style="left:145.5px;top:292.78px;height:11px;line-height:11px;font-size:7.8px;color:#000;font-weight:400;-webkit-text-stroke:0.1px #000;width:56.8px;">12521 Duck Lake Canal Rd</div>
<div class="t " style="left:204.29999999999998px;top:292.78px;height:11px;line-height:11px;font-size:7.8px;color:#000;font-weight:400;-webkit-text-stroke:0.1px #000;width:56.8px;">Dade City</div>
<div class="t " style="left:263.1px;top:292.78px;height:11px;line-height:11px;font-size:7.8px;color:#000;font-weight:400;-webkit-text-stroke:0.1px #000;width:56.8px;">FL</div>
<div class="t " style="left:321.90000000000003px;top:292.78px;height:11px;line-height:11px;font-size:7.8px;color:#000;font-weight:400;-webkit-text-stroke:0.1px #000;width:56.8px;">33525-7200</div>
<div class="t " style="left:27.900000000000002px;top:305.00px;height:11px;line-height:11px;font-size:7.8px;color:#000;font-weight:400;-webkit-text-stroke:0.1px #000;width:56.8px;">Isabella</div>
<div class="t " style="left:86.7px;top:305.00px;height:11px;line-height:11px;font-size:7.8px;color:#000;font-weight:400;-webkit-text-stroke:0.1px #000;width:56.8px;">Anderson</div>
<div class="t " style="left:145.5px;top:305.00px;height:11px;line-height:11px;font-size:7.8px;color:#000;font-weight:400;-webkit-text-stroke:0.1px #000;width:56.8px;">36441 Lanson Ave</div>
<div class="t " style="left:204.29999999999998px;top:305.00px;height:11px;line-height:11px;font-size:7.8px;color:#000;font-weight:400;-webkit-text-stroke:0.1px #000;width:56.8px;">New Port Richey</div>
<div class="t " style="left:263.1px;top:305.00px;height:11px;line-height:11px;font-size:7.8px;color:#000;font-weight:400;-webkit-text-stroke:0.1px #000;width:56.8px;">FL</div>
<div class="t " style="left:321.90000000000003px;top:305.00px;height:11px;line-height:11px;font-size:7.8px;color:#000;font-weight:400;-webkit-text-stroke:0.1px #000;width:56.8px;">34653-2906</div>
<div class="t " style="left:27.900000000000002px;top:317.23px;height:11px;line-height:11px;font-size:7.8px;color:#000;font-weight:400;-webkit-text-stroke:0.1px #000;width:56.8px;">Charlotte</div>
<div class="t " style="left:86.7px;top:317.23px;height:11px;line-height:11px;font-size:7.8px;color:#000;font-weight:400;-webkit-text-stroke:0.1px #000;width:56.8px;">Thomas</div>
<div class="t " style="left:145.5px;top:317.23px;height:11px;line-height:11px;font-size:7.8px;color:#000;font-weight:400;-webkit-text-stroke:0.1px #000;width:56.8px;">14603 Sydney Rd</div>
<div class="t " style="left:204.29999999999998px;top:317.23px;height:11px;line-height:11px;font-size:7.8px;color:#000;font-weight:400;-webkit-text-stroke:0.1px #000;width:56.8px;">Dover</div>
<div class="t " style="left:263.1px;top:317.23px;height:11px;line-height:11px;font-size:7.8px;color:#000;font-weight:400;-webkit-text-stroke:0.1px #000;width:56.8px;">FL</div>
<div class="t " style="left:321.90000000000003px;top:317.23px;height:11px;line-height:11px;font-size:7.8px;color:#000;font-weight:400;-webkit-text-stroke:0.1px #000;width:56.8px;">33527-5749</div>
<div class="t " style="left:27.900000000000002px;top:329.46px;height:11px;line-height:11px;font-size:7.8px;color:#000;font-weight:400;-webkit-text-stroke:0.1px #000;width:56.8px;">Mia</div>
<div class="t " style="left:86.7px;top:329.46px;height:11px;line-height:11px;font-size:7.8px;color:#000;font-weight:400;-webkit-text-stroke:0.1px #000;width:56.8px;">Martinez</div>
<div class="t " style="left:145.5px;top:329.46px;height:11px;line-height:11px;font-size:7.8px;color:#000;font-weight:400;-webkit-text-stroke:0.1px #000;width:56.8px;">1914 Abbey Ridge Dr</div>
<div class="t " style="left:204.29999999999998px;top:329.46px;height:11px;line-height:11px;font-size:7.8px;color:#000;font-weight:400;-webkit-text-stroke:0.1px #000;width:56.8px;">Dover</div>
<div class="t " style="left:263.1px;top:329.46px;height:11px;line-height:11px;font-size:7.8px;color:#000;font-weight:400;-webkit-text-stroke:0.1px #000;width:56.8px;">FL</div>
<div class="t " style="left:321.90000000000003px;top:329.46px;height:11px;line-height:11px;font-size:7.8px;color:#000;font-weight:400;-webkit-text-stroke:0.1px #000;width:56.8px;">33527-6008</div>
<div class="t " style="left:27.900000000000002px;top:341.68px;height:11px;line-height:11px;font-size:7.8px;color:#000;font-weight:400;-webkit-text-stroke:0.1px #000;width:56.8px;">Harper</div>
<div class="t " style="left:86.7px;top:341.68px;height:11px;line-height:11px;font-size:7.8px;color:#000;font-weight:400;-webkit-text-stroke:0.1px #000;width:56.8px;">Moore</div>
<div class="t " style="left:145.5px;top:341.68px;height:11px;line-height:11px;font-size:7.8px;color:#000;font-weight:400;-webkit-text-stroke:0.1px #000;width:56.8px;">4623 Fietzway Rd</div>
<div class="t " style="left:204.29999999999998px;top:341.68px;height:11px;line-height:11px;font-size:7.8px;color:#000;font-weight:400;-webkit-text-stroke:0.1px #000;width:56.8px;">Holiday</div>
<div class="t " style="left:263.1px;top:341.68px;height:11px;line-height:11px;font-size:7.8px;color:#000;font-weight:400;-webkit-text-stroke:0.1px #000;width:56.8px;">FL</div>
<div class="t " style="left:321.90000000000003px;top:341.68px;height:11px;line-height:11px;font-size:7.8px;color:#000;font-weight:400;-webkit-text-stroke:0.1px #000;width:56.8px;">34691-4731</div>
<div class="t " style="left:27.900000000000002px;top:353.91px;height:11px;line-height:11px;font-size:7.8px;color:#000;font-weight:400;-webkit-text-stroke:0.1px #000;width:56.8px;">Evelyn</div>
<div class="t " style="left:86.7px;top:353.91px;height:11px;line-height:11px;font-size:7.8px;color:#000;font-weight:400;-webkit-text-stroke:0.1px #000;width:56.8px;">Hernandez</div>
<div class="t " style="left:145.5px;top:353.91px;height:11px;line-height:11px;font-size:7.8px;color:#000;font-weight:400;-webkit-text-stroke:0.1px #000;width:56.8px;">11910 North St</div>
<div class="t " style="left:204.29999999999998px;top:353.91px;height:11px;line-height:11px;font-size:7.8px;color:#000;font-weight:400;-webkit-text-stroke:0.1px #000;width:56.8px;">Gibsonton</div>
<div class="t " style="left:263.1px;top:353.91px;height:11px;line-height:11px;font-size:7.8px;color:#000;font-weight:400;-webkit-text-stroke:0.1px #000;width:56.8px;">FL</div>
<div class="t " style="left:321.90000000000003px;top:353.91px;height:11px;line-height:11px;font-size:7.8px;color:#000;font-weight:400;-webkit-text-stroke:0.1px #000;width:56.8px;">33534-5614</div>
<svg style="left:0;top:0" width="600" height="400"><rect x="26.5" y="106.2" width="57.3" height="11" fill="none" stroke="#3c78d8" stroke-width="1.2"/><rect x="82.5" y="115.8" width="3.8" height="3.8" fill="#3c78d8" stroke="#fff" stroke-width="0.6"/></svg>
<div class="b" style="left:416.5px;top:91.3px;width:6.5px;height:293.7px;background:#fafafa;border-left:1px solid #e6e6e6;border-right:1px solid #e0e0e0;box-sizing:border-box;"></div>
<svg style="left:0;top:0" width="600" height="400"><rect x="416.5" y="118.3" width="6" height="2.1" fill="#d1d7df"/></svg>
<div class="b" style="left:417.4px;top:121px;width:4.4px;height:14.6px;background:#d0d1d3;border-radius:2.2px;"></div>
<div class="b" style="left:0;top:385px;width:600px;height:15px;background:#fff;"></div>
<div class="b" style="left:423.1px;top:55px;width:175.5px;height:330px;background:#fff;border-right:1px solid #e6e6e6;box-sizing:border-box;"></div>
<div class="b" style="left:423.1px;top:55px;width:174.89999999999998px;height:20.8px;background:#585858;"></div>
<div class="t " style="left:431px;top:60.70px;height:12px;line-height:12px;font-size:7.05px;color:#ffffff;font-weight:700;-webkit-text-stroke:0.1px currentColor;">Labelmaker</div>
<svg style="left:583.8px;top:62px" width="7.6" height="7.4" viewBox="0 0 14 14"><path d="M1.5 1.5 L12.5 12.5 M12.5 1.5 L1.5 12.5" stroke="#fff" stroke-width="2.4" fill="none"/></svg>
<div class="t " style="left:433px;top:84.60px;height:12px;line-height:12px;font-size:7.9px;color:#50545a;font-weight:400;-webkit-text-stroke:0.1px currentColor;">Design Labels</div>
<div class="b" style="left:583.4px;top:86.5px;width:1.6px;height:1.6px;border-radius:1px;background:#54585d;"></div>
<div class="b" style="left:583.4px;top:89.4px;width:1.6px;height:1.6px;border-radius:1px;background:#54585d;"></div>
<div class="b" style="left:583.4px;top:92.3px;width:1.6px;height:1.6px;border-radius:1px;background:#54585d;"></div>
<div class="b" style="left:424.1px;top:103.8px;width:172.89999999999998px;height:1px;background:#e8eaed;"></div>
<div class="t " style="left:433px;top:112.60px;height:12px;line-height:12px;font-size:8.12px;color:#3c4043;font-weight:400;-webkit-text-stroke:0.2px currentColor;">Label template</div>
<div class="b" style="left:432.4px;top:131px;width:156.6px;height:20.6px;border:1px solid #dfe1e5;border-radius:2.5px;box-sizing:border-box;"></div>
<div class="t " style="left:441.5px;top:135.60px;height:12px;line-height:12px;font-size:8.2px;color:#1e8e3e;font-weight:400;-webkit-text-stroke:0.25px currentColor;">Avery US Letter - 5160 Easy Peel ®...</div>
<div class="t " style="left:433px;top:169.00px;height:12px;line-height:12px;font-size:8.12px;color:#3c4043;font-weight:400;-webkit-text-stroke:0.2px currentColor;">Format labels</div>
<div class="t " style="left:433px;top:186.60px;height:12px;line-height:12px;font-size:8.13px;color:#3c4043;font-weight:400;-webkit-text-stroke:0.1px currentColor;">Add merge fields</div>
<div class="b" style="left:432.4px;top:201px;width:156.6px;height:20.2px;border:1px solid #dfe1e5;border-radius:2.5px;box-sizing:border-box;"></div>
<div class="t " style="left:438px;top:205.60px;height:12px;line-height:12px;font-size:8.1px;color:#202124;font-weight:400;-webkit-text-stroke:0.1px currentColor;">Select a merge field</div>
<svg style="left:574.5px;top:209.95px" width="5" height="2.5" viewBox="0 0 10 5"><path d="M0 0 H10 L5 5 Z" fill="#202124"/></svg>
<div class="t " style="left:433px;top:231.00px;height:12px;line-height:12px;font-size:8.1px;color:#4d5156;font-weight:400;-webkit-text-stroke:0.1px currentColor;">Label content</div>
<div class="b" style="left:432.4px;top:244.4px;width:156.6px;height:90.7px;border:1px solid #dfe1e5;border-radius:2.5px;box-sizing:border-box;"></div>
<div class="t " style="left:438px;top:261.10px;height:13px;line-height:13px;font-size:7.5px;color:#202124;font-weight:700;-webkit-text-stroke:0.1px currentColor;">&lt;&lt;Firstname&gt;&gt; &lt;&lt;Lastname&gt;&gt;</div>
<svg style="left:0;top:0" width="600" height="400"><polyline points="446.0,270.0 447.0,271.0 448.0,270.0 449.0,271.0 450.0,270.0 451.0,271.0 452.0,270.0 453.0,271.0 454.0,270.0 455.0,271.0 456.0,270.0 457.0,271.0 458.0,270.0 459.0,271.0 460.0,270.0 461.0,271.0 462.0,270.0 463.0,271.0 464.0,270.0 465.0,271.0 466.0,270.0 467.0,271.0 468.0,270.0 469.0,271.0 470.0,270.0 471.0,271.0 472.0,270.0 473.0,271.0 474.0,270.0 475.0,271.0 476.0,270.0 477.0,271.0 478.0,270.0 479.0,271.0 480.0,270.0 481.0,271.0 482.0,270.0 483.0,271.0" fill="none" stroke="#ec6a62" stroke-width="0.65"/></svg>
<div class="t " style="left:438px;top:272.60px;height:12px;line-height:12px;font-size:7.7px;color:#3c3c3c;font-weight:400;-webkit-text-stroke:0.1px currentColor;">&lt;&lt;Address&gt;&gt;</div>
<div class="t " style="left:438px;top:283.60px;height:12px;line-height:12px;font-size:7.68px;color:#3c3c3c;font-weight:400;-webkit-text-stroke:0.1px currentColor;">&lt;&lt;City&gt;&gt; &lt;&lt;State&gt;&gt; &lt;&lt;Zipcode&gt;&gt;</div>
<div class="b" style="left:433.4px;top:312px;width:154.6px;height:1px;background:#e8eaed;"></div>
<div class="t " style="left:437.7px;top:318.40px;height:12px;line-height:12px;font-size:9.3px;color:#4d5156;font-weight:700;text-align:center;width:8px;-webkit-text-stroke:0.1px currentColor;">B</div>
<div class="t " style="left:452.3px;top:318.40px;height:12px;line-height:12px;font-size:10px;color:#4d5156;font-weight:700;text-align:center;font-style:italic;font-family:'Liberation Serif',serif;width:8px;-webkit-text-stroke:0.1px currentColor;">I</div>
<div class="t " style="left:466.8px;top:318.10px;height:12px;line-height:12px;font-size:8.6px;color:#4d5156;font-weight:400;text-align:center;text-decoration:underline;text-underline-offset:1px;width:8px;-webkit-text-stroke:0.1px currentColor;">U</div>
<div class="b" style="left:480.3px;top:317.8px;width:1px;height:12px;background:#e0e0e0;"></div>
<div class="b" style="left:484.6px;top:317.5px;width:12px;height:12.6px;background:#e0efe6;border-radius:1.5px;"></div>
<div class="b" style="left:487.10px;top:319.90px;width:7.40px;height:0.9px;background:#4d5156;"></div>
<div class="b" style="left:487.10px;top:321.65px;width:4.59px;height:0.9px;background:#4d5156;"></div>
<div class="b" style="left:487.10px;top:323.40px;width:7.40px;height:0.9px;background:#4d5156;"></div>
<div class="b" style="left:487.10px;top:325.15px;width:4.59px;height:0.9px;background:#4d5156;"></div>
<div class="b" style="left:487.10px;top:326.90px;width:7.40px;height:0.9px;background:#4d5156;"></div>
<div class="b" style="left:501.90px;top:319.90px;width:7.40px;height:0.9px;background:#4d5156;"></div>
<div class="b" style="left:503.31px;top:321.65px;width:4.59px;height:0.9px;background:#4d5156;"></div>
<div class="b" style="left:501.90px;top:323.40px;width:7.40px;height:0.9px;background:#4d5156;"></div>
<div class="b" style="left:503.31px;top:325.15px;width:4.59px;height:0.9px;background:#4d5156;"></div>
<div class="b" style="left:501.90px;top:326.90px;width:7.40px;height:0.9px;background:#4d5156;"></div>
<div class="b" style="left:516.10px;top:319.90px;width:7.40px;height:0.9px;background:#4d5156;"></div>
<div class="b" style="left:518.91px;top:321.65px;width:4.59px;height:0.9px;background:#4d5156;"></div>
<div class="b" style="left:516.10px;top:323.40px;width:7.40px;height:0.9px;background:#4d5156;"></div>
<div class="b" style="left:518.91px;top:325.15px;width:4.59px;height:0.9px;background:#4d5156;"></div>
<div class="b" style="left:516.10px;top:326.90px;width:7.40px;height:0.9px;background:#4d5156;"></div>
<div class="b" style="left:529.7px;top:317.8px;width:1px;height:12px;background:#e0e0e0;"></div>
<div class="b" style="left:548px;top:317.5px;width:12.8px;height:12.6px;background:#e0efe6;border-radius:1.5px;"></div>
<svg style="left:535.9px;top:319.8px" width="7" height="8" viewBox="0 0 14 16"><path d="M0.5 1 H13.5" stroke="#4d5156" stroke-width="1.8"/><path d="M7 15 V6.5" stroke="#4d5156" stroke-width="1.8"/><path d="M3 8 L7 4 L11 8 Z" fill="#4d5156"/></svg>
<svg style="left:550.9px;top:318.3px" width="7" height="11" viewBox="0 0 14 22"><path d="M0.5 11 H13.5" stroke="#4d5156" stroke-width="1.8"/><path d="M7 0 V5 M7 22 V17" stroke="#4d5156" stroke-width="1.8"/><path d="M3.5 4 L7 8 L10.5 4 Z M3.5 18 L7 14 L10.5 18 Z" fill="#4d5156"/></svg>
<svg style="left:564.5px;top:319.8px" width="7" height="8" viewBox="0 0 14 16"><path d="M0.5 15 H13.5" stroke="#4d5156" stroke-width="1.8"/><path d="M7 1 V9.5" stroke="#4d5156" stroke-width="1.8"/><path d="M3 8 L7 12 L11 8 Z" fill="#4d5156"/></svg>
<div class="b" style="left:459px;top:352.4px;width:45.4px;height:21px;border:1px solid #e0e2e6;border-radius:2.5px;box-sizing:border-box;background:#fff;"></div>
<div class="t " style="left:459px;top:357.60px;height:12px;line-height:12px;font-size:7.8px;color:#1e8e3e;font-weight:700;text-align:center;width:45.4px;-webkit-text-stroke:0.1px currentColor;">Help</div>
<div class="b" style="left:512.4px;top:353px;width:76px;height:19.6px;background:#04914a;border-radius:2.5px;"></div>
<div class="t " style="left:512.4px;top:357.60px;height:12px;line-height:12px;font-size:7.8px;color:#ffffff;font-weight:700;text-align:center;width:76px;-webkit-text-stroke:0.1px currentColor;">Create labels</div>
<svg style="left:551px;top:359.8px" width="10" height="12" viewBox="0 0 20 24"><path d="M6.5 1.5 Q8 0.3 9.3 1.5 V9 L15.5 10.2 Q18.5 11 18.2 14 L17 21 Q16.6 23 14.5 23 H9.5 Q7.8 23 6.8 21.6 L1.6 14.6 Q0.8 13 2.4 12.4 Q3.8 12 5 13.2 L6.5 14.8 Z" fill="#fff" stroke="#222" stroke-width="1.6" stroke-linejoin="round"/></svg>
</div></body></html>
